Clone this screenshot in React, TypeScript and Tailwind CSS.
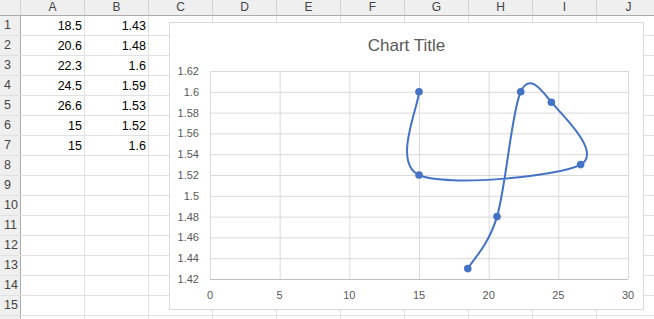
import React from "react";

const cols = ["A", "B", "C", "D", "E", "F", "G", "H", "I", "J"];
const data: [number, number][] = [
  [18.5, 1.43],
  [20.6, 1.48],
  [22.3, 1.6],
  [24.5, 1.59],
  [26.6, 1.53],
  [15, 1.52],
  [15, 1.6],
];

// chart box sits at page (169, 22)
const OX = 169;
const OY = 22;
const px = (x: number) => 210 + x * (418 / 30) - OX;
const py = (y: number) => 279 - (y - 1.42) * 1040 - OY;

function smoothPath(pts: [number, number][]) {
  const p = pts.map(([x, y]) => [px(x), py(y)]);
  let d = `M${p[0][0].toFixed(1)},${p[0][1].toFixed(1)}`;
  for (let i = 0; i < p.length - 1; i++) {
    const p0 = p[i - 1] || p[i];
    const p1 = p[i];
    const p2 = p[i + 1];
    const p3 = p[i + 2] || p2;
    const c1x = p1[0] + (p2[0] - p0[0]) / 6;
    const c1y = p1[1] + (p2[1] - p0[1]) / 6;
    const c2x = p2[0] - (p3[0] - p1[0]) / 6;
    const c2y = p2[1] - (p3[1] - p1[1]) / 6;
    d += ` C${c1x.toFixed(1)},${c1y.toFixed(1)} ${c2x.toFixed(1)},${c2y.toFixed(1)} ${p2[0].toFixed(1)},${p2[1].toFixed(1)}`;
  }
  return d;
}

function Chart() {
  const yTicks = [1.42, 1.44, 1.46, 1.48, 1.5, 1.52, 1.54, 1.56, 1.58, 1.6, 1.62];
  const xTicks = [0, 5, 10, 15, 20, 25, 30];
  return (
    <div className="absolute left-[169px] top-[22px] w-[475px] h-[288px] bg-white border border-[#d9d9d9]">
      <div className="absolute left-0 right-0 top-[10px] text-center text-[17px] text-[#595959] font-['Liberation_Sans',sans-serif]">
        Chart Title
      </div>
      <svg width="475" height="288" className="absolute -left-px -top-px">
        {yTicks.map((t) => (
          <g key={t}>
            <line x1={px(0)} x2={px(30)} y1={py(t) + 0.5} y2={py(t) + 0.5} stroke={t === 1.42 ? "#bfbfbf" : "#d9d9d9"} strokeWidth="1" />
            <text x={px(0) - 11} y={py(t) + 4} textAnchor="end" fontSize="11" fill="#595959" fontFamily="Liberation Sans, sans-serif">
              {String(t)}
            </text>
          </g>
        ))}
        {xTicks.map((t) => (
          <g key={t}>
            <line x1={px(t) + 0.5} x2={px(t) + 0.5} y1={py(1.62)} y2={py(1.42)} stroke="#d9d9d9" strokeWidth="1" />
            <text x={px(t)} y={py(1.42) + 20} textAnchor="middle" fontSize="11" fill="#595959" fontFamily="Liberation Sans, sans-serif">
              {t}
            </text>
          </g>
        ))}
        <path d={smoothPath(data)} fill="none" stroke="#4472c4" strokeWidth="2" strokeLinecap="round" />
        {data.map(([x, y], i) => (
          <circle key={i} cx={px(x)} cy={py(y)} r="3.8" fill="#4472c4" />
        ))}
      </svg>
    </div>
  );
}

export default function App() {
  const rows = Array.from({ length: 16 }, (_, i) => i + 1);
  return (
    <div className="relative w-[654px] h-[319px] overflow-hidden bg-white font-['Liberation_Sans',sans-serif] text-[12.5px] text-black">
      {/* column headers */}
      <div className="flex h-[16px] bg-[#efefef] border-b border-[#ababab]">
        <div className="w-[21px] shrink-0 border-r border-[#d4d4d4]" />
        {cols.map((c) => (
          <div key={c} className="w-[64px] shrink-0 border-r border-[#d4d4d4] text-center text-[12px] leading-[15px] text-[#444]">
            {c}
          </div>
        ))}
      </div>
      {rows.map((r) => {
        const row = data[r - 1];
        return (
          <div key={r} className="flex h-[20px] border-b border-[#e1e1e1]">
            <div className="w-[21px] shrink-0 bg-[#efefef] border-r border-[#ababab] pl-[4px] text-[12.5px] leading-[19px] text-[#444]">
              {r < 16 ? r : ""}
            </div>
            {cols.map((c, ci) => (
              <div key={c} className="w-[64px] shrink-0 border-r border-[#e1e1e1] text-right pr-[2px] leading-[20px]">
                {row && ci < 2 ? String(row[ci]) : ""}
              </div>
            ))}
          </div>
        );
      })}
      <Chart />
    </div>
  );
}
